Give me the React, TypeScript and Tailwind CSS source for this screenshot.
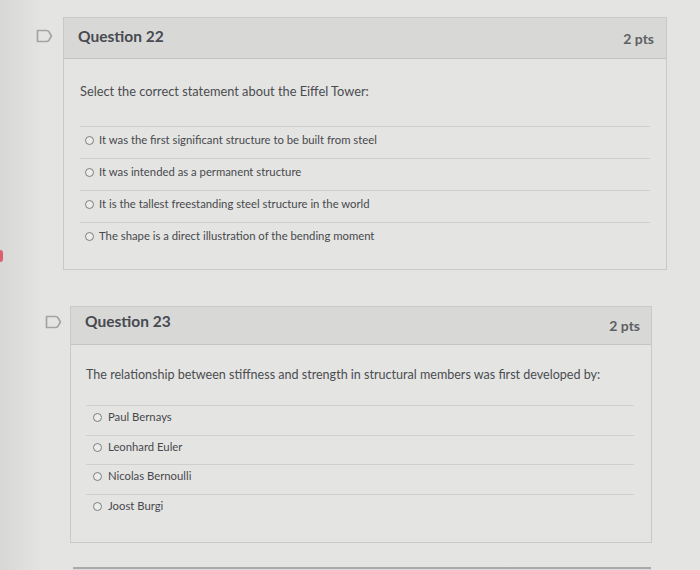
import React from 'react';

type Question = {
  title: string;
  points: string;
  prompt: string;
  answers: string[];
};

const q22: Question = {
  title: 'Question 22',
  points: '2 pts',
  prompt: 'Select the correct statement about the Eiffel Tower:',
  answers: [
    'It was the first significant structure to be built from steel',
    'It was intended as a permanent structure',
    'It is the tallest freestanding steel structure in the world',
    'The shape is a direct illustration of the bending moment',
  ],
};

const q23: Question = {
  title: 'Question 23',
  points: '2 pts',
  prompt:
    'The relationship between stiffness and strength in structural members was first developed by:',
  answers: ['Paul Bernays', 'Leonhard Euler', 'Nicolas Bernoulli', 'Joost Burgi'],
};

function FlagIcon() {
  return (
    <svg width="17" height="14" viewBox="0 0 17 14" fill="none" stroke="#a3a4a6" strokeWidth="1.7" strokeLinejoin="round">
      <path d="M1.5 1.5 H10.5 Q12 1.5 13 2.8 L15.4 7 L13 11.2 Q12 12.5 10.5 12.5 H1.5 Z" />
    </svg>
  );
}

function Radio() {
  return <span className="w-[9px] h-[9px] rounded-full border border-[#7b7d80] bg-[#ececea] flex-shrink-0" />;
}

export default function App() {
  return (
    <div className="relative w-[700px] h-[570px] overflow-hidden bg-linear-to-r from-[#d7d7d5] from-0% to-[#e4e4e2] to-[6%] pt-[17px] font-['Lato','Open_Sans',sans-serif] text-[#4a4c50]">
      {/* red smudge on the left edge */}
      <div className="absolute left-0 top-[250px] w-[3px] h-[12px] rounded-r bg-[#d9606c]" />

      {/* Question 22 */}
      <div className="flex items-start pl-[36px]">
        <div className="mt-[12px]">
          <FlagIcon />
        </div>
        <div className="ml-[10px] w-[604px] border border-[#c9c9c7] bg-[#e4e4e2]">
          <div className="h-[41px] bg-[#d8d8d6] border-b border-[#c4c4c2] flex items-center justify-between pl-[14px] pr-[12px]">
            <span className="text-[15.5px] font-bold text-[#474a50] mb-[3px]">{q22.title}</span>
            <span className="text-[14px] font-bold text-[#5d6065]">{q22.points}</span>
          </div>
          <div className="px-[16px] pt-[22px] pb-[15px]">
            <p className="text-[12.8px] leading-[20px] mb-[25px] whitespace-nowrap">{q22.prompt}</p>
            <div>
              {q22.answers.map((a) => (
                <div key={a} className="h-[32px] border-t border-[#d0d0ce] flex items-center gap-[5px] pl-[5px] pb-[5px]">
                  <Radio />
                  <span className="text-[11.3px] text-[#47494d] whitespace-nowrap">{a}</span>
                </div>
              ))}
            </div>
          </div>
        </div>
      </div>

      {/* Question 23 */}
      <div className="flex items-start pl-[45px] mt-[36px]">
        <div className="mt-[9px]">
          <FlagIcon />
        </div>
        <div className="ml-[8px] w-[582px] border border-[#c9c9c7] bg-[#e4e4e2]">
          <div className="h-[38px] bg-[#d8d8d6] border-b border-[#c4c4c2] flex items-center justify-between pl-[14px] pr-[11px]">
            <span className="text-[15.5px] font-bold text-[#474a50] mb-[8px]">{q23.title}</span>
            <span className="text-[14px] font-bold text-[#5d6065]">{q23.points}</span>
          </div>
          <div className="pl-[15px] pr-[17px] pt-[20px] pb-[19px]">
            <p className="text-[12.55px] leading-[20px] mb-[20px] whitespace-nowrap">{q23.prompt}</p>
            <div>
              {q23.answers.map((a) => (
                <div key={a} className="h-[29.5px] border-t border-[#d0d0ce] flex items-center gap-[6px] pl-[7px] pb-[5px]">
                  <Radio />
                  <span className="text-[11.3px] text-[#47494d] whitespace-nowrap">{a}</span>
                </div>
              ))}
            </div>
          </div>
        </div>
      </div>

      {/* next question, cut off */}
      <div className="ml-[73px] mt-[24px] w-[578px] h-[40px] border-t-2 border-[#a9aaab] bg-[#dcdcda]" />
    </div>
  );
}
